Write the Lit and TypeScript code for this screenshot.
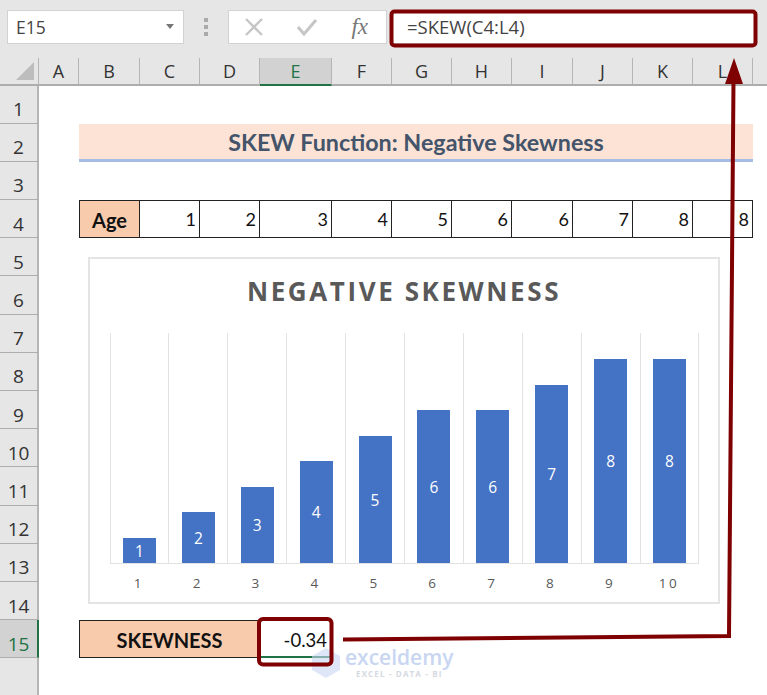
import { LitElement, html, css } from "lit";
import { customElement } from "lit/decorators.js";

const COLS = ["A", "B", "C", "D", "E", "F", "G", "H", "I", "J", "K", "L"];
const AGES = [1, 2, 3, 4, 5, 6, 6, 7, 8, 8];
const UNIT = 25.5;

@customElement("app-root")
export class AppRoot extends LitElement {
  static styles = css`
    :host {
      display: block;
      position: relative;
      width: 767px;
      height: 695px;
      overflow: hidden;
      background: #fff;
      font-family: "Open Sans", sans-serif;
      color: #333;
    }
    .toolbar {
      display: flex;
      align-items: center;
      height: 58px;
      padding: 0 12px 5px 7px;
      box-sizing: border-box;
      background: #e6e6e6;
    }
    .box {
      display: flex;
      align-items: center;
      box-sizing: border-box;
      height: 34px;
      background: #fff;
      border: 1px solid #d2d2d2;
    }
    .name {
      width: 177px;
      padding: 0 9px 0 8px;
      justify-content: space-between;
      font-size: 17.5px;
      color: #444;
    }
    .caret {
      width: 0;
      height: 0;
      border: 4px solid transparent;
      border-top: 5px solid #777;
      border-bottom: 0;
    }
    .grip {
      display: flex;
      flex-direction: column;
      gap: 3px;
      margin: 0 20px 0 20px;
    }
    .grip i {
      display: block;
      width: 4px;
      height: 4px;
      background: #aaa;
    }
    .btns {
      width: 159px;
      padding: 0 18px 0 16px;
      justify-content: space-between;
    }
    .fx {
      font: italic 23px "Liberation Serif", serif;
      color: #777;
    }
    .formula {
      flex: 1;
      margin-left: 4px;
      padding-left: 15px;
      font-size: 18.5px;
      color: #444;
    }
    .sheet {
      display: grid;
      grid-template-columns: 39px 40px 61px 60px 60px 72px 60px 60px 60px 61px 60px 60px 60px 14px;
      grid-template-rows: 27.5px repeat(15, 38.2px) 1fr;
      height: 637px;
      font-family: "Lato", sans-serif;
      color: #111;
    }
    .corner {
      display: flex;
      align-items: flex-end;
      justify-content: flex-end;
      padding: 0 4px 4px 0;
      box-sizing: border-box;
      background: #e6e6e6;
      border-right: 1px solid #b5b5b5;
      border-bottom: 2px solid #adadad;
    }
    .corner div {
      width: 0;
      height: 0;
      border-style: solid;
      border-width: 0 0 18px 18px;
      border-color: transparent transparent #bdbdbd transparent;
    }
    .ch {
      display: flex;
      align-items: center;
      justify-content: center;
      box-sizing: border-box;
      background: #e6e6e6;
      border-right: 1px solid #b5b5b5;
      border-bottom: 2px solid #adadad;
      font: 18px "Open Sans", sans-serif;
      color: #333;
    }
    .ch.sel {
      background: #d2d2d2;
      border-bottom: 2px solid #217346;
      color: #217346;
    }
    .rh {
      display: flex;
      align-items: center;
      justify-content: center;
      grid-column: 1;
      box-sizing: border-box;
      padding-top: 10px;
      background: #e6e6e6;
      border-right: 2px solid #b5b5b5;
      border-bottom: 1px solid #adadad;
      font: 19px "Open Sans", sans-serif;
      color: #333;
    }
    .rh.sel {
      background: #d2d2d2;
      border-right: 2px solid #217346;
      color: #217346;
    }
    .rh.rest {
      border-bottom: 0;
    }
    .title {
      grid-row: 3;
      grid-column: 3 / 14;
      display: flex;
      align-items: center;
      justify-content: center;
      box-sizing: border-box;
      padding-top: 1px;
      background: #fde3d6;
      border-bottom: 3px solid #a6bce4;
      font-size: 23.3px;
      font-weight: 700;
      color: #44546a;
    }
    .cell {
      display: flex;
      align-items: center;
      justify-content: flex-end;
      box-sizing: border-box;
      padding-right: 3px;
      border: solid #222;
      border-width: 1.5px 1.5px 1.5px 0;
      font-size: 18px;
    }
    .age {
      grid-row: 5;
      grid-column: 3;
      justify-content: center;
      padding: 1px 0 0;
      border-left-width: 1.5px;
      background: #f8cbad;
      font-weight: 700;
      font-size: 20px;
    }
    .chart {
      grid-row: 6 / 16;
      grid-column: 3 / 14;
      display: flex;
      flex-direction: column;
      align-items: flex-start;
      box-sizing: border-box;
      margin: 19px 33px 16px 9px;
      padding: 12px 0 0 19.5px;
      background: #fff;
      border: 2px solid #e4e4e4;
      font-family: "Open Sans", sans-serif;
    }
    .chart h2 {
      margin: 0 0 22px -19.5px;
      width: calc(100% + 19.5px);
      height: 40px;
      line-height: 40px;
      text-align: center;
      font-size: 26px;
      font-weight: 700;
      letter-spacing: 2.6px;
      color: #595959;
    }
    .plot {
      display: grid;
      grid-template-columns: repeat(10, 58.9px);
      height: 230px;
      border-bottom: 1.5px solid #e2e2e2;
      border-right: 1.5px solid #e2e2e2;
    }
    .slot {
      display: flex;
      align-items: flex-end;
      justify-content: center;
      border-left: 1.5px solid #e2e2e2;
    }
    .bar {
      display: flex;
      align-items: center;
      justify-content: center;
      width: 33px;
      background: #4472c4;
      color: #fff;
      font-size: 15.5px;
    }
    .axis {
      display: grid;
      grid-template-columns: repeat(10, 58.9px);
      margin-top: 10px;
      font-size: 13.5px;
      letter-spacing: 2.5px;
      text-align: center;
      color: #595959;
    }
    .sk-label {
      grid-row: 16;
      grid-column: 3 / 6;
      justify-content: center;
      padding: 2px 0 0;
      border-left-width: 1.5px;
      background: #f8cbad;
      font-weight: 700;
      font-size: 20px;
    }
    .sk-value {
      grid-row: 16;
      grid-column: 6;
      padding: 3px 5px 0 0;
      border: 0;
      border-bottom: 2px solid #217346;
      font-size: 18.5px;
    }
    .marks {
      position: absolute;
      inset: 0;
      width: 767px;
      height: 695px;
      pointer-events: none;
    }
    .wm {
      position: absolute;
      left: 345px;
      top: 647px;
      font-family: "Open Sans", sans-serif;
      color: #c9d6f2;
      line-height: 1;
    }
    .wm b {
      display: block;
      font-size: 21px;
      font-weight: 600;
    }
    .wm span {
      display: block;
      margin: 2px 0 0 11px;
      font-size: 8px;
      font-weight: 700;
      letter-spacing: 1.15px;
      color: #d5d9e2;
      white-space: nowrap;
    }
  `;

  render() {
    return html`
      <div class="toolbar">
        <div class="box name">E15<span class="caret"></span></div>
        <div class="grip"><i></i><i></i><i></i></div>
        <div class="box btns">
          <svg width="18" height="18" viewBox="0 0 18 18" fill="none" stroke="#c6c6c6" stroke-width="2.4">
            <path d="M1 1 L17 17 M17 1 L1 17" />
          </svg>
          <svg width="20" height="18" viewBox="0 0 20 18" fill="none" stroke="#c6c6c6" stroke-width="3">
            <path d="M1 9 L7 16 L19 2" />
          </svg>
          <span class="fx">fx</span>
        </div>
        <div class="box formula">=SKEW(C4:L4)</div>
      </div>
      <div class="sheet">
        <div class="corner"><div></div></div>
        ${COLS.map((c) => html`<div class="ch ${c === "E" ? "sel" : ""}">${c}</div>`)}
        <div class="ch" style="border-right:0"></div>
        ${Array.from({ length: 15 }, (_, i) => html`
          <div class="rh ${i === 14 ? "sel" : ""}" style="grid-row:${i + 2}">${i + 1}</div>
        `)}
        <div class="rh rest" style="grid-row:17"></div>
        <div class="title">SKEW Function: Negative Skewness</div>
        <div class="cell age">Age</div>
        ${AGES.map((a, i) => html`
          <div class="cell" style="grid-row:5;grid-column:${i + 4}">${a}</div>
        `)}
        <div class="chart">
          <h2>NEGATIVE SKEWNESS</h2>
          <div class="plot">
            ${AGES.map((a) => html`
              <div class="slot"><div class="bar" style="height:${a * UNIT}px">${a}</div></div>
            `)}
          </div>
          <div class="axis">${AGES.map((_, i) => html`<span>${i + 1}</span>`)}</div>
        </div>
        <div class="cell sk-label">SKEWNESS</div>
        <div class="cell sk-value">-0.34</div>
      </div>
      <div class="wm"><b>exceldemy</b><span>EXCEL - DATA - BI</span></div>
      <svg class="marks" viewBox="0 0 767 695" fill="none">
        <path d="M326 648 L340 656 L340 670 L326 678 L312 670 L312 656 Z" fill="#c9d6f2" opacity="0.6" />
        <rect x="391.5" y="11.5" width="364" height="34" rx="3" stroke="#7f0000" stroke-width="4" />
        <rect x="259" y="619" width="72.5" height="45.5" rx="4" stroke="#7f0000" stroke-width="4" />
        <path d="M343 639.5 L729 636 L733.5 80" stroke="#7f0000" stroke-width="4" />
        <path d="M734 58 L743 84 L725 84 Z" fill="#7f0000" />
      </svg>
    `;
  }
}
